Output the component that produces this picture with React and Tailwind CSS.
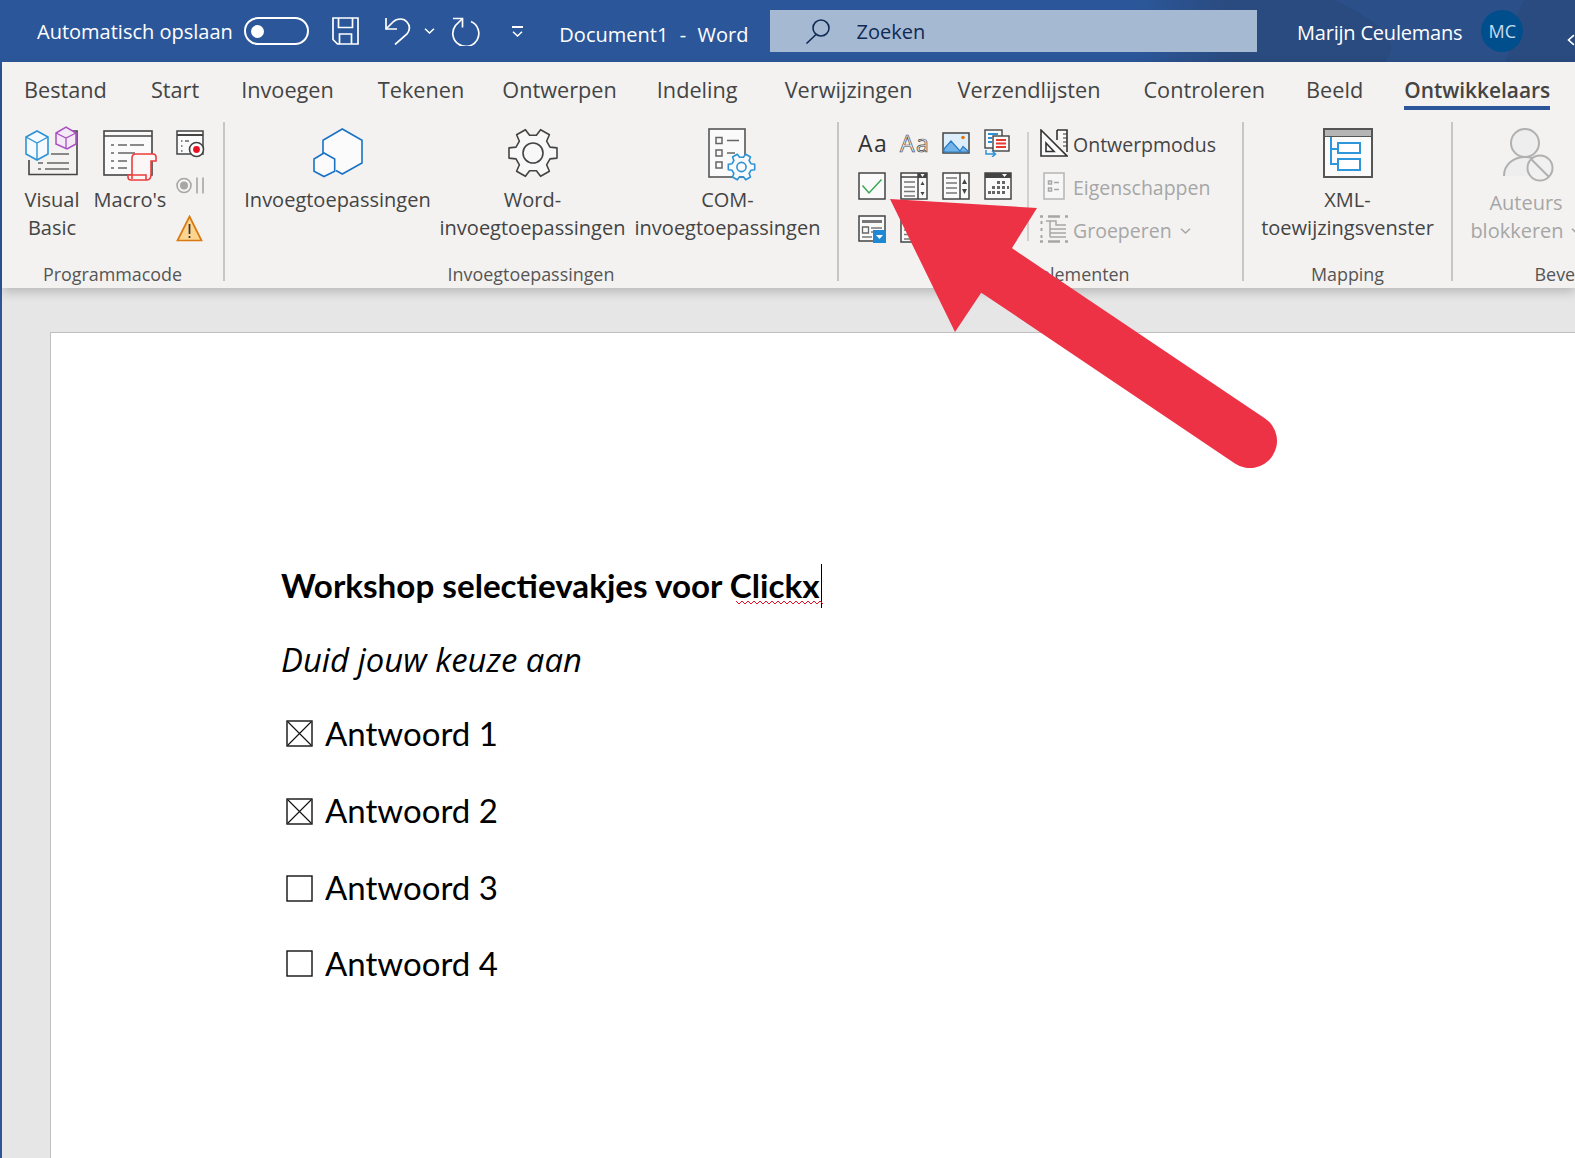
import React from 'react';

const tabs = [
  { label: 'Bestand', ml: '' },
  { label: 'Start', ml: 'ml-[44px]' },
  { label: 'Invoegen', ml: 'ml-[42px]' },
  { label: 'Tekenen', ml: 'ml-[44px]' },
  { label: 'Ontwerpen', ml: 'ml-[38px]' },
  { label: 'Indeling', ml: 'ml-[40px]' },
  { label: 'Verwijzingen', ml: 'ml-[47px]' },
  { label: 'Verzendlijsten', ml: 'ml-[45px]' },
  { label: 'Controleren', ml: 'ml-[43px]' },
  { label: 'Beeld', ml: 'ml-[41px]' },
];

const answers = [
  { label: 'Antwoord 1', checked: true, mt: '-mt-[2px]' },
  { label: 'Antwoord 2', checked: true, mt: 'mt-[2px]' },
  { label: 'Antwoord 3', checked: false, mt: 'mt-[1px]' },
  { label: 'Antwoord 4', checked: false, mt: '' },
];

// tandwiel als pad, voor de twee gear-iconen
const gearPath = (cx, cy, outer, root, teeth = 6) => {
  const pts = [];
  const step = (Math.PI * 2) / teeth;
  for (let i = 0; i < teeth; i++) {
    const a = i * step;
    const at = (r, d) => `${(cx + r * Math.cos(a + d)).toFixed(1)} ${(cy + r * Math.sin(a + d)).toFixed(1)}`;
    pts.push(at(root, -step * 0.32), at(outer, -step * 0.2), at(outer, step * 0.2), at(root, step * 0.32));
  }
  return 'M' + pts.join(' L') + ' Z';
};

const SaveIcon = () => (
  <svg width="27" height="28" viewBox="0 0 27 28" fill="none" stroke="#fff" strokeWidth="1.7">
    <path d="M1 1 H26 V27 H5.5 L1 22.5 Z" />
    <path d="M6.5 1 V10.5 H20.5 V1" />
    <path d="M7.5 27 V17 H19.5 V27" />
  </svg>
);

const UndoIcon = () => (
  <svg width="26" height="28" viewBox="0 0 26 28" fill="none" stroke="#fff" strokeWidth="1.7">
    <path d="M1 1 V12 H12" />
    <path d="M1 12 L8 5 C12 1 19 1 22 5 C25.5 9 25 13 22 17 L10 27.5" />
  </svg>
);

const RedoIcon = () => (
  <svg width="30" height="29" viewBox="0 0 30 29" fill="none" stroke="#fff" strokeWidth="1.7">
    <path d="M2 1.5 H11.5 V10.5" />
    <path d="M20 4.5 A13 13 0 1 1 4.5 8.5 L11.5 1.5" />
  </svg>
);

const SearchIcon = () => (
  <svg width="26" height="25" viewBox="0 0 26 25" fill="none" stroke="#0f2a55" strokeWidth="1.6">
    <circle cx="16" cy="9" r="8" />
    <path d="M11 15.5 L1.5 24.5" />
  </svg>
);

const VisualBasicIcon = () => (
  <svg width="54" height="50" viewBox="0 0 54 50" fill="none">
    <path d="M42 5 H52 V48.5 H4 V34" stroke="#444" strokeWidth="1.6" />
    <path d="M26 28 H44 M13 37 H18 M22 37 H44 M13 43 H16 M20 43 H44" stroke="#666" strokeWidth="1.5" />
    <path d="M31 7 L31 18 L42 23 L51 18 L51 7 L41 1 Z" fill="#f3eaf6" stroke="#a94fc0" strokeWidth="1.5" />
    <path d="M31 7 L41 12 L51 7 M41 12 V23" stroke="#a94fc0" strokeWidth="1.3" />
    <path d="M1 11 V28 L12 34 L23 28 V11 L12 5 Z" fill="#f4fafe" stroke="#2d93d6" strokeWidth="1.6" />
    <path d="M1 11 L12 17 L23 11 M12 17 V34" stroke="#2d93d6" strokeWidth="1.4" />
  </svg>
);

const MacroIcon = () => (
  <svg width="54" height="52" viewBox="0 0 54 52" fill="none">
    <rect x="1" y="1" width="48" height="44" fill="#fafafa" stroke="#444" strokeWidth="1.6" />
    <path d="M1 6 H49" stroke="#444" strokeWidth="1.5" />
    <path d="M8 15 H11 M15 15 H24 M27 15 H41 M8 23 H11 M15 23 H32 M8 31 H11 M15 31 H24 M8 38 H11 M15 38 H24" stroke="#666" strokeWidth="1.5" />
    <path d="M29 49 V28 C29 25 30 24 33 24 H50 C52 24 53 25 53 27 V31 H48 V44 C48 47 47 50 44 50 H28 C26 50 25 49 25 47 V45 H43 V50" fill="#fbf7f7" stroke="#ee3d3d" strokeWidth="1.6" />
  </svg>
);

const RecordIcon = () => (
  <svg width="29" height="29" viewBox="0 0 29 29" fill="none">
    <rect x="1" y="2" width="26" height="23" fill="#fafafa" stroke="#444" strokeWidth="1.5" />
    <path d="M1 6 H27" stroke="#444" strokeWidth="2" />
    <path d="M5 12 H6.5 M9 12 H13 M5 17 H6.5 M5 22 H6.5" stroke="#666" strokeWidth="1.3" />
    <circle cx="20.5" cy="20.5" r="7" fill="#fff" stroke="#444" strokeWidth="1.6" />
    <circle cx="20.5" cy="20.5" r="3.4" fill="#e81123" />
  </svg>
);

const PauseIcon = () => (
  <svg width="29" height="17" viewBox="0 0 29 17" fill="none">
    <circle cx="8" cy="8.5" r="7" stroke="#a6a6a6" strokeWidth="1.6" />
    <circle cx="8" cy="8.5" r="4" fill="#a6a6a6" />
    <path d="M21 0.5 V16.5 M27 0.5 V16.5" stroke="#a6a6a6" strokeWidth="1.6" />
  </svg>
);

const WarningIcon = () => (
  <svg width="27" height="27" viewBox="0 0 27 27" fill="none">
    <path d="M13.5 1.5 L25.5 25.5 H1.5 Z" fill="#fcd591" stroke="#d97a10" strokeWidth="1.7" />
    <path d="M13.5 9 V19" stroke="#333" strokeWidth="1.7" />
    <path d="M13.5 21 V23" stroke="#333" strokeWidth="1.7" />
  </svg>
);

const AddinIcon = () => (
  <svg width="50" height="50" viewBox="0 0 50 50" fill="none" stroke="#1a72c4" strokeWidth="1.6">
    <path d="M10 25 V12.3 L29.3 1 L49 12.3 V35 L29.3 46 L22 42 L10 25 Z" fill="#fbfbfb" stroke="none" />
    <path d="M10 25 V12.3 L29.3 1 L49 12.3 V35 L29.3 46 L23 42.5" />
    <path d="M11 25 L21.7 31 V43.3 L11 48.5 L1 43.3 V31 Z" fill="#fbfbfb" />
  </svg>
);

const WordGearIcon = () => (
  <svg width="50" height="50" viewBox="0 0 50 50" fill="none" stroke="#444" strokeWidth="1.6">
    <path d={gearPath(25, 25, 24.5, 18)} fill="#f8f8f8" strokeLinejoin="round" />
    <circle cx="25" cy="25" r="10" />
  </svg>
);

const ComIcon = () => (
  <svg className="ml-[8px]" width="48" height="53" viewBox="0 0 48 53" fill="none">
    <rect x="1" y="1" width="36" height="48" fill="#fafafa" stroke="#555" strokeWidth="1.6" />
    <path d="M8 9.5 h6 v6 h-6 Z M8 22 h6 v6 h-6 Z M8 34 h6 v6 h-6 Z" stroke="#666" strokeWidth="1.5" />
    <path d="M19 12.5 H31 M19 25 H27" stroke="#666" strokeWidth="1.5" />
    <path d={gearPath(33.5, 39, 13.5, 10)} fill="#fafafa" stroke="#2d93d6" strokeWidth="1.6" strokeLinejoin="round" />
    <circle cx="33.5" cy="39" r="4.6" stroke="#2d93d6" strokeWidth="1.6" />
  </svg>
);

const PictureIcon = () => (
  <svg width="28" height="22" viewBox="0 0 28 22" fill="none">
    <rect x="1" y="1" width="26" height="20" fill="#dceefb" stroke="#444" strokeWidth="1.5" />
    <path d="M2 17 L9 9 L18 19 L21 14.5 L26 19 V20 H2 Z" fill="#74b3e8" stroke="#2b7cc4" strokeWidth="1.2" />
    <circle cx="21" cy="5.5" r="1.8" fill="#e8710a" />
  </svg>
);

const BuildingBlockIcon = () => (
  <svg width="26" height="28" viewBox="0 0 26 28" fill="none">
    <rect x="1" y="1" width="17" height="18" fill="#fafafa" stroke="#444" strokeWidth="1.4" />
    <path d="M4 5 H14 M4 9 H8 M4 13 H8" stroke="#2d93d6" strokeWidth="1.8" />
    <rect x="9" y="7" width="16" height="15" fill="#fafafa" stroke="#444" strokeWidth="1.4" />
    <path d="M12 11 H22 M12 14.5 H22 M12 18 H22" stroke="#e8392f" strokeWidth="2" />
    <path d="M2 21 V25 H11 M8 22 L11.5 25 L8 28" stroke="#2d93d6" strokeWidth="1.5" />
  </svg>
);

const CheckIcon = () => (
  <svg width="28" height="28" viewBox="0 0 28 28" fill="none">
    <rect x="1" y="1" width="26" height="26" fill="#fafafa" stroke="#444" strokeWidth="1.5" />
    <path d="M4.5 13.5 L11 21 L23.5 7.5" stroke="#3aa655" strokeWidth="1.5" />
  </svg>
);

const ComboIcon = () => (
  <svg width="28" height="28" viewBox="0 0 28 28" fill="none">
    <rect x="1" y="1" width="26" height="26" fill="#fafafa" stroke="#444" strokeWidth="1.5" />
    <path d="M1 5 H18 M18 1 V27" stroke="#444" strokeWidth="1.5" />
    <rect x="18" y="1" width="9" height="5" fill="#444" />
    <path d="M20.5 2 H24.5 L22.5 5 Z" fill="#fff" />
    <path d="M4 10 H15 M4 15 H15 M4 19.5 H15 M4 24 H15" stroke="#777" strokeWidth="1.6" />
    <path d="M20.5 13 H24.5 L22.5 9.5 Z M20.5 20 H24.5 L22.5 23.5 Z" fill="#444" />
  </svg>
);

const ListIcon = () => (
  <svg width="28" height="28" viewBox="0 0 28 28" fill="none">
    <rect x="1" y="1" width="26" height="26" fill="#fafafa" stroke="#444" strokeWidth="1.5" />
    <path d="M18 1 V27" stroke="#444" strokeWidth="1.5" />
    <path d="M4 6 H15 M4 11 H15 M4 16 H15 M4 21 H15" stroke="#777" strokeWidth="1.6" />
    <path d="M20 12 H25 L22.5 7 Z M20 17 H25 L22.5 22 Z" fill="#444" />
  </svg>
);

const DateIcon = () => (
  <svg width="28" height="28" viewBox="0 0 28 28" fill="none">
    <rect x="1" y="1" width="26" height="26" fill="#fafafa" stroke="#444" strokeWidth="1.5" />
    <rect x="1" y="1" width="26" height="5" fill="#444" />
    <path d="M18 2 H23 L20.5 5 Z" fill="#fff" />
    <path d="M13 9 h3 v3 h-3 Z M18 9 h3 v3 h-3 Z M8 14 h3 v3 h-3 Z M13 14 h3 v3 h-3 Z M18 14 h3 v3 h-3 Z M23 14 h2 v3 h-2 Z M4 19 h3 v3 h-3 Z M8 19 h3 v3 h-3 Z M13 19 h3 v3 h-3 Z M18 19 h3 v3 h-3 Z" fill="#666" />
  </svg>
);

const LegacyIcon = () => (
  <svg width="28" height="28" viewBox="0 0 28 28" fill="none">
    <path d="M27 18 V1 H1 V26 H15" fill="#fafafa" stroke="#444" strokeWidth="1.5" />
    <rect x="4" y="5" width="20" height="3" fill="#777" />
    <path d="M4.5 12 h6 v6 h-6 Z" stroke="#666" strokeWidth="1.3" />
    <path d="M13 13 H24 M13 17 H15 M4 22 H14" stroke="#777" strokeWidth="1.5" />
    <rect x="15" y="15" width="13" height="13" fill="#1e88d4" />
    <path d="M18 20 H25 L21.5 24 Z" fill="#fff" />
  </svg>
);

const DesignIcon = () => (
  <svg width="28" height="28" viewBox="0 0 28 28" fill="none" stroke="#333" strokeWidth="1.6">
    <path d="M1 1 L27 27 H1 Z" fill="#fafafa" />
    <path d="M6 14 L14 22.5 H6 Z" />
    <path d="M17 1 H27 V23 M17 1 V11" fill="#fafafa" />
    <path d="M23 5 H27 M23 9 H27 M23 13 H27 M23 17 H27" strokeWidth="1.2" />
  </svg>
);

const PropertiesIcon = () => (
  <svg width="22" height="28" viewBox="0 0 22 28" fill="none" stroke="#b5b5b5" strokeWidth="1.5">
    <rect x="1" y="1" width="20" height="26" fill="#f6f6f6" />
    <path d="M5.5 9 h3 v3 h-3 Z M5.5 16 h3 v3 h-3 Z" stroke="#a6a6a6" />
    <path d="M11 10.5 H16 M11 17.5 H16" stroke="#a6a6a6" />
  </svg>
);

const GroupIcon = () => (
  <svg width="28" height="28" viewBox="0 0 28 28" fill="none" stroke="#a6a6a6" strokeWidth="1.5">
    <path d="M0 1.5 H3 M8 1.5 H20 M25 1.5 H28 M0 26.5 H3 M25 26.5 H28 M8 26.5 H20" strokeWidth="2.4" />
    <path d="M1.5 6 V9 M1.5 13 V16 M1.5 20 V23" strokeWidth="2" />
    <path d="M6 6 H16 V10 H26 M10 6 V22 M10 14 H26 M10 18 H26 M10 22 H26" />
  </svg>
);

const XmlIcon = () => (
  <svg width="50" height="50" viewBox="0 0 50 50" fill="none">
    <rect x="1" y="1" width="48" height="48" fill="#fbfbfb" stroke="#555" strokeWidth="2" />
    <rect x="2" y="2" width="46" height="6.5" fill="#b5b5b5" />
    <path d="M1 8.5 H49" stroke="#555" strokeWidth="1.2" />
    <path d="M8 9 V36 H15 M8 21 H15" stroke="#2f96dc" strokeWidth="2" />
    <rect x="15" y="15" width="22" height="10" fill="#fff" stroke="#2f96dc" strokeWidth="2" />
    <rect x="15" y="31" width="22" height="11" fill="#fff" stroke="#2f96dc" strokeWidth="2" />
  </svg>
);

const AuthorsIcon = () => (
  <svg width="60" height="60" viewBox="0 0 60 60" fill="none" stroke="#b0b0b0" strokeWidth="2">
    <path d="M8 50 C8 38 18 31 29 31 C40 31 48 38 48 50 Z" fill="#eeeeee" stroke="none" />
    <path d="M8 50 C8 38 18 31 29 31 C34 31 38 32 41 34" />
    <circle cx="29" cy="17" r="14" fill="#eeeeee" />
    <circle cx="44" cy="42" r="12.5" fill="#f0f0f0" />
    <path d="M35.5 33.5 L52.5 50.5" />
  </svg>
);

const Chevron = ({ color = '#fff', w = 11, h = 6 }) => (
  <svg width={w} height={h} viewBox="0 0 11 6" fill="none" stroke={color} strokeWidth="1.5">
    <path d="M1 0.8 L5.5 5 L10 0.8" />
  </svg>
);

const BigButton = ({ icon, lines, width, disabled, pad = 'pt-[6px]', h = 'h-[64px]' }) => (
  <div className={`flex flex-col items-center shrink-0 ${width}`}>
    <div className={`flex justify-center ${h} ${pad}`}>{icon}</div>
    {lines.map((line, i) => (
      <div key={i} className={`flex items-center h-[28px] leading-[28px] whitespace-nowrap ${disabled ? 'text-[#a6a6a6]' : ''}`}>{line}</div>
    ))}
  </div>
);

const Group = ({ label, width, border = true, children }) => (
  <div className={`flex flex-col shrink-0 h-[159px] ${width} ${border ? 'border-r-2 border-[#c8c6c4]' : ''}`}>
    <div className="flex-1 flex min-h-0">{children}</div>
    <div className="h-[12px] -translate-y-[1px] leading-[12px] text-center text-[17.9px] text-[#555] whitespace-nowrap">{label}</div>
  </div>
);

const SmallCommand = ({ icon, label, disabled, chevron }) => (
  <div className="flex items-center h-[43px] w-[190px]">
    <div className="w-[33px] flex justify-center pr-[5px]">{icon}</div>
    <span className={`whitespace-nowrap pt-[5px] text-[19.5px] ${disabled ? 'text-[#a6a6a6]' : ''}`}>{label}</span>
    {chevron && <span className="ml-[8px] pt-[5px]"><Chevron color="#a6a6a6" /></span>}
  </div>
);

export default function App() {
  return (
    <div className="relative w-[1575px] h-[1158px] overflow-hidden bg-[#2b579a] font-['Open_Sans',sans-serif]">
      {/* Titelbalk */}
      <div className="relative flex items-center h-[62px] pl-[37px] text-white text-[20px] bg-linear-to-r from-[#2b579a] from-[72%] to-[#2a4b80] to-[78%]">
        <svg className="absolute right-0 top-0" width="300" height="62" viewBox="0 0 300 62">
          <path d="M60 0 H250 C235 20 240 40 230 62 H110 C130 40 100 20 60 0 Z" fill="#2b5590" opacity="0.55" />
        </svg>
        <span className="relative mt-[1px] whitespace-nowrap">Automatisch opslaan</span>
        <div className="relative ml-[11px] flex items-center w-[66px] h-[28px] rounded-full border-2 border-white pl-[5px]">
          <div className="w-[13px] h-[13px] rounded-full bg-white" />
        </div>
        <div className="relative ml-[23px]"><SaveIcon /></div>
        <div className="relative ml-[26px]"><UndoIcon /></div>
        <div className="relative ml-[13px]"><Chevron /></div>
        <div className="relative ml-[16px]"><RedoIcon /></div>
        <div className="relative ml-[31px] flex flex-col items-center gap-[3px]">
          <div className="w-[11px] h-[2px] bg-white" />
          <Chevron />
        </div>
        <span className="relative ml-[36px] mt-[8px] whitespace-nowrap [word-spacing:0.5px]">Document1&nbsp; -&nbsp; Word</span>
        <div className="relative ml-[22px] flex items-center w-[490px] h-[42px] bg-[#a6b9d3] pl-[35px] text-[#0f2a55]">
          <SearchIcon />
          <span className="ml-[25px] pt-[2px]">Zoeken</span>
        </div>
        <span className="relative ml-[40px] mt-[3px] whitespace-nowrap tracking-[-0.2px]">Marijn Ceulemans</span>
        <div className="relative ml-[19px] flex items-center justify-center w-[42px] h-[42px] rounded-full bg-[#004e8c] text-[18px] text-[#c7dcf0]">MC</div>
        <svg className="relative ml-[44px] mt-[18px]" width="8" height="12" viewBox="0 0 8 12" fill="none" stroke="#fff" strokeWidth="1.6">
          <path d="M7 1 L1.5 6 L7 11" />
        </svg>
      </div>

      {/* Lint */}
      <div className="relative z-10 ml-[2px] h-[226px] bg-[#f3f2f1] text-[#444] text-[20px] shadow-[0_4px_10px_rgba(0,0,0,0.2)]">
        <div className="flex items-center h-[56px] pl-[22px] pt-[1px] text-[21.7px]">
          {tabs.map((tab) => (
            <span key={tab.label} className={`whitespace-nowrap ${tab.ml}`}>{tab.label}</span>
          ))}
          <span className="relative ml-[41px] whitespace-nowrap font-semibold text-[20.9px]">
            Ontwikkelaars
            <span className="absolute left-0 right-0 bottom-[-4px] h-[4px] bg-[#2b579a]" />
          </span>
        </div>

        <div className="flex mt-[4px]">
          <Group label="Programmacode" width="w-[223px]">
            <div className="flex pl-[12px]">
              <BigButton width="w-[76px]" icon={<VisualBasicIcon />} lines={['Visual', 'Basic']} pad="pt-[4px]" />
              <BigButton width="w-[76px] ml-[2px]" icon={<MacroIcon />} lines={["Macro's"]} pad="pt-[8px]" />
              <div className="flex flex-col ml-[8px] pt-[7px]">
                <RecordIcon />
                <div className="mt-[19px]"><PauseIcon /></div>
                <div className="mt-[21px]"><WarningIcon /></div>
              </div>
            </div>
          </Group>

          <Group label="Invoegtoepassingen" width="w-[614px]">
            <div className="flex pl-[15px]">
              <BigButton width="w-[195px]" icon={<AddinIcon />} lines={['Invoegtoepassingen']} />
              <BigButton width="w-[195px]" icon={<WordGearIcon />} lines={['Word-', 'invoegtoepassingen']} />
              <BigButton width="w-[195px]" icon={<ComIcon />} lines={['COM-', 'invoegtoepassingen']} />
            </div>
          </Group>

          <Group label="Besturingselementen" width="w-[405px]">
            <div className="flex pl-[19px] pt-[7px]">
              <div className="grid grid-cols-[repeat(4,42px)] auto-rows-[43px] w-[169px]">
                <div className="leading-[28px] text-[23px] tracking-[1.5px] text-[#333]">Aa</div>
                <div className="leading-[28px] text-[23px] tracking-[1.5px] text-transparent [-webkit-text-stroke:0.7px_#444]">Aa</div>
                <div className="pt-[3px]"><PictureIcon /></div>
                <BuildingBlockIcon />
                <CheckIcon />
                <ComboIcon />
                <ListIcon />
                <DateIcon />
                <LegacyIcon />
                <ComboIcon />
              </div>
              <div className="w-[2px] h-[109px] mt-[3px] bg-[#d2d0ce]" />
              <div className="ml-[11px] flex flex-col -mt-[8px]">
                <SmallCommand icon={<DesignIcon />} label="Ontwerpmodus" />
                <SmallCommand icon={<PropertiesIcon />} label="Eigenschappen" disabled />
                <SmallCommand icon={<GroupIcon />} label="Groeperen" disabled chevron />
              </div>
            </div>
          </Group>

          <Group label="Mapping" width="w-[209px]">
            <BigButton width="w-full" icon={<XmlIcon />} lines={['XML-', 'toewijzingsvenster']} />
          </Group>

          <Group label="Beveiligen" width="w-[248px]" border={false}>
            <BigButton
              width="w-[146px]"
              icon={<AuthorsIcon />}
              lines={[
                'Auteurs',
                <>blokkeren<span className="ml-[7px]"><Chevron color="#a6a6a6" /></span></>,
              ]}
              disabled
              pad="pt-[4px]"
              h="h-[67px]"
            />
          </Group>
        </div>
      </div>

      {/* Document */}
      <div className="ml-[2px] pl-[48px] pt-[44px] h-[870px] bg-[#e6e6e6]">
        <div className="w-[1600px] h-[900px] bg-white border border-[#c0c0c0] pl-[230px] pt-[215px] font-['Lato',sans-serif] text-black text-[33px] leading-[75.8px]">
          <div className="font-bold text-[33.2px] relative w-fit whitespace-nowrap">
            Workshop selectievakjes voor Clickx
            <span className="absolute right-[-2px] top-[16px] h-[44px] w-px bg-black" />
            <svg className="absolute right-[-4px] top-[52px]" width="88" height="6" viewBox="0 0 88 6" fill="none" stroke="#e81123" strokeWidth="1">
              <path d="M0 1 L3 4 L6 1 L9 4 L12 1 L15 4 L18 1 L21 4 L24 1 L27 4 L30 1 L33 4 L36 1 L39 4 L42 1 L45 4 L48 1 L51 4 L54 1 L57 4 L60 1 L63 4 L66 1 L69 4 L72 1 L75 4 L78 1 L81 4 L84 1 L87 4" />
            </svg>
          </div>
          <div className="italic -mt-[2px] font-['Open_Sans',sans-serif] text-[32.8px]">Duid jouw keuze aan</div>
          {answers.map((a) => (
            <div key={a.label} className={`flex items-center pl-[5px] ${a.mt}`}>
              <svg width="27" height="27" viewBox="0 0 27 27" fill="none" stroke="#111" strokeWidth="1.4">
                <rect x="1" y="1" width="25" height="25" />
                {a.checked && <path d="M2 2 L25 25 M25 2 L2 25" strokeWidth="1.1" />}
              </svg>
              <span className="ml-[12px]">{a.label}</span>
            </div>
          ))}
        </div>
      </div>

      {/* Rode pijl */}
      <svg className="absolute left-0 top-0 z-20 pointer-events-none" width="1575" height="1158" viewBox="0 0 1575 1158" fill="none">
        <path d="M996 270 L1250 441" stroke="#ed3246" strokeWidth="54" strokeLinecap="round" />
        <path d="M890 199 L1037 208 L1012 248 L1000 262 L985 290 L981 293 L955 332 Z" fill="#ed3246" />
      </svg>
    </div>
  );
}
